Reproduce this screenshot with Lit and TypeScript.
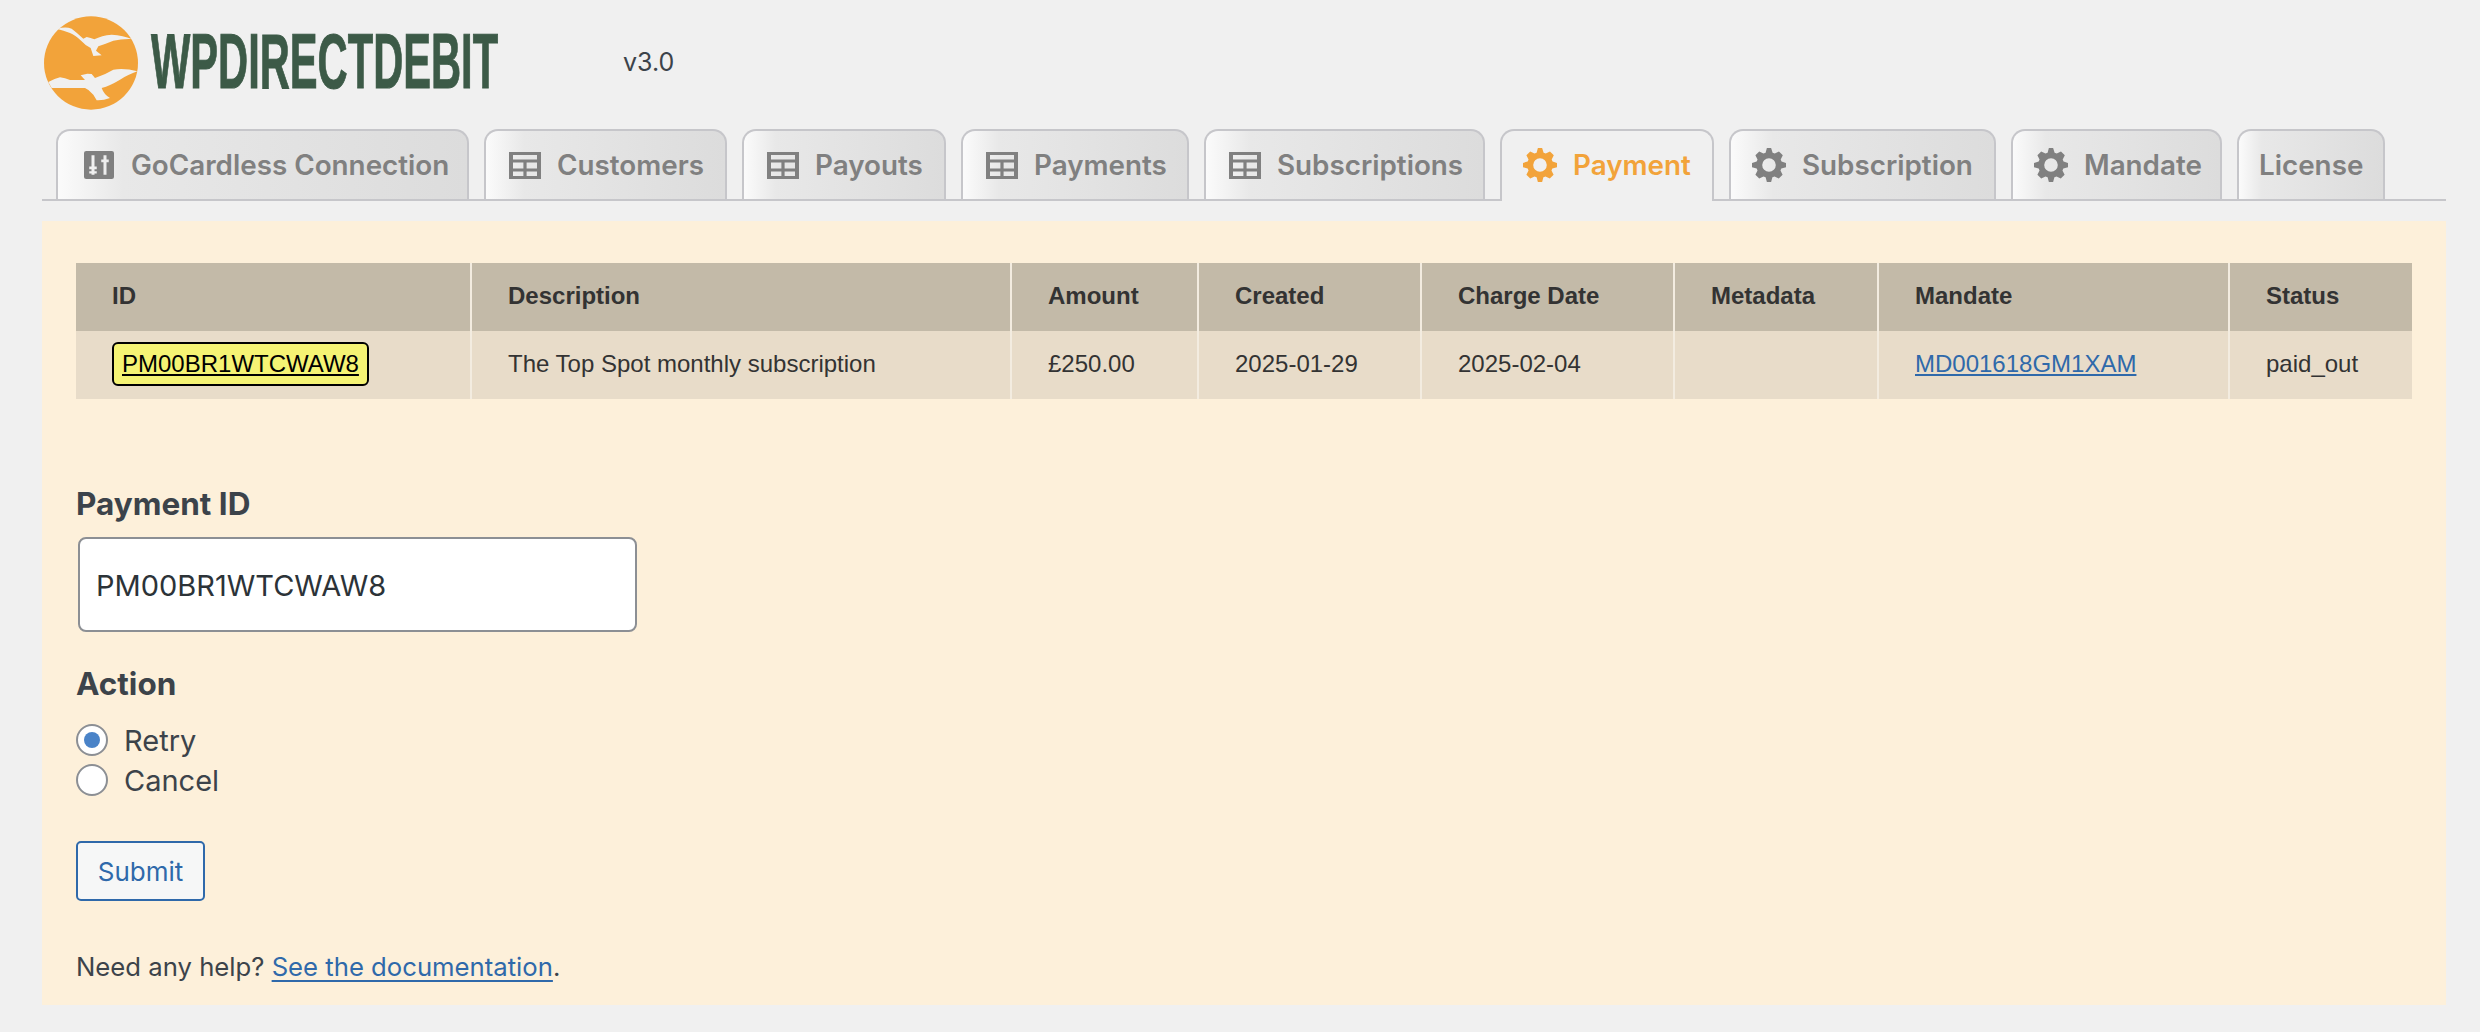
import { LitElement, html, css, svg } from "lit";
import { customElement } from "lit/decorators.js";

const gear = svg`<path fill-rule="evenodd" d="M18 11v-2l-2.100-.6-.4-1 1-2-1.800-1.800-2 1-1-.4L11 2H9L8.400 4.200l-1 .4-2-1L3.600 5.400l1 2-.4 1L2 9v2l2.200.6.4 1-1 2L5.400 16.400l2-1 1 .4L9 18h2l.6-2.200 1-.4 2 1 1.800-1.800-1-2 .4-1zM10 13.200a3.200 3.200 0 1 1 0-6.400 3.200 3.200 0 0 1 0 6.400z"/>`;
const tableIcon = svg`<path fill-rule="evenodd" d="M0 1h20v18H0zM2.500 3v3h15V3zM2.500 8v4H9V8zM11 8v4h6.500V8zM2.500 14v3H9v-3zM11 14v3h6.500v-3z"/>`;
const sliders = svg`<path fill-rule="evenodd" d="M1.500 0h17A1.500 1.500 0 0 1 20 1.500v17a1.500 1.500 0 0 1-1.500 1.500h-17A1.500 1.500 0 0 1 0 18.500v-17A1.500 1.500 0 0 1 1.500 0zM5 3v8H3.500v2H5v1.500H3.500V16H5v1h2v-1h1.500v-1.500H7V13h1.500v-2H7V3zM13 3v3h-1.500v2H13v9h2V8h1.500V6H15V3z"/>`;

type Tab = { label: string; icon?: "g" | "t" | "s"; active?: boolean; w: number };
const TABS: Tab[] = [
  { label: "GoCardless Connection", icon: "s", w: 413 },
  { label: "Customers", icon: "t", w: 243 },
  { label: "Payouts", icon: "t", w: 204 },
  { label: "Payments", icon: "t", w: 228 },
  { label: "Subscriptions", icon: "t", w: 281 },
  { label: "Payment", icon: "g", active: true, w: 214 },
  { label: "Subscription", icon: "g", w: 267 },
  { label: "Mandate", icon: "g", w: 211 },
  { label: "License", w: 148 },
];

const COLS = [395, 540, 187, 223, 253, 204, 351, 183];
const HEAD = ["ID", "Description", "Amount", "Created", "Charge Date", "Metadata", "Mandate", "Status"];

@customElement("app-root")
export class AppRoot extends LitElement {
  static styles = css`
    :host { display: block; width: 2480px; height: 1032px; background: #f0f0f0; overflow: hidden; font-family: Inter, "Liberation Sans", sans-serif; color: #3c434a; }
    .head { display: flex; align-items: flex-start; height: 129px; padding: 16px 0 0 44px; box-sizing: border-box; }
    .logo { width: 94px; height: 94px; flex: none; }
    .brand { width: 347px; margin-left: 13px; margin-top: 15px; height: 60px; line-height: 60px; font-family: "Liberation Sans", sans-serif; font-weight: 700; font-size: 78px; color: #3c5a47; white-space: nowrap; }
    .brand span { display: inline-block; transform-origin: left center; transform: scaleX(0.534); -webkit-text-stroke: 1px #3c5a47; }
    .ver { margin-left: 125px; margin-top: 30px; font-size: 25px; line-height: 32px; }
    .tabs { display: flex; gap: 15px; margin: 0 34px 0 42px; padding-left: 14px; height: 72px; box-sizing: border-box; border-bottom: 2px solid #c6c6ca; }
    .tab { height: 70px; box-sizing: border-box; flex: none; display: flex; align-items: center; gap: 16px; border: 2px solid #c6c6ca; border-bottom: 0; border-radius: 14px 14px 0 0; background: linear-gradient(to right, #fbfbfb, #e8e8e8 16%, #dcdcdc); color: #808080; font-weight: 600; font-size: 27.800px; padding: 0 0 0 23px; }
    .tab.g { padding-left: 21px; }
    .tab.s { padding-left: 26px; gap: 17px; }
    .tab.n { padding-left: 20px; }
    .tab.on { background: #f0f0f0; color: #f2a33a; position: relative; z-index: 1; height: 72px; padding-bottom: 2px; }
    .tab svg { flex: none; fill: #808080; }
    .tab.on svg { fill: #f2a33a; }
    .tab.t svg { width: 32px; height: 27px; }
    .tab.g svg { width: 34px; height: 34px; }
    .tab.s svg { width: 30px; height: 28px; }
    .panel { margin: 20px 34px 0 42px; height: 784px; background: #fdf0da; padding: 42px 34px 0 34px; box-sizing: border-box; }
    table { border-collapse: collapse; table-layout: fixed; width: 2336px; font-family: "Liberation Sans", sans-serif; font-size: 24px; color: #333; }
    th, td { text-align: left; padding: 0 0 2px 36px; height: 68px; box-sizing: border-box; border-left: 2px solid #f3ece0; }
    th:first-child, td:first-child { border-left: 0; }
    th { background: #c3baa8; font-weight: 700; }
    td { background: #e8dcc9; font-weight: 400; }
    .chip { display: inline-block; border: 2px solid #000; border-radius: 6px; background: #f5f374; color: #000; text-decoration: underline; padding: 0 8px; height: 44px; line-height: 40px; box-sizing: border-box; vertical-align: middle; }
    a { color: #2f69aa; text-decoration: underline; }
    .lab { font-size: 31.500px; font-weight: 700; line-height: 40px; }
    .l1 { margin-top: 85px; }
    .inp { display: block; margin: 13px 0 0 2px; width: 559px; height: 95px; box-sizing: border-box; border: 2px solid #8c8f94; border-radius: 8px; background: #fff; font: 400 29px Inter, sans-serif; color: #2c3338; padding: 2px 16px 0; outline: none; }
    .l2 { margin-top: 32px; }
    .radios { margin-top: 16px; display: flex; flex-direction: column; }
    .radio { display: flex; align-items: center; gap: 16px; height: 40px; font-size: 29px; }
    .dot { width: 32px; height: 32px; box-sizing: border-box; border: 2px solid #8c8f94; border-radius: 50%; background: #fff; display: flex; align-items: center; justify-content: center; flex: none; }
    .dot.on::after { content: ""; width: 16px; height: 16px; border-radius: 50%; background: #4a83c8; }
    .submit { display: block; margin-top: 41px; width: 129px; height: 60px; box-sizing: border-box; border: 2px solid #2f69aa; border-radius: 5px; background: #f6f7f7; color: #2f69aa; font: 400 26px Inter, sans-serif; padding: 0; }
    .help { margin-top: 48px; font-size: 25.700px; line-height: 36px; }
    .help a { text-underline-offset: 4px; text-decoration-thickness: 2px; }
  `;

  icon(k?: string) {
    if (!k) return null;
    if (k === "g") return html`<svg viewBox="2 2 16 16">${gear}</svg>`;
    if (k === "t") return html`<svg viewBox="0 1 20 18" preserveAspectRatio="none">${tableIcon}</svg>`;
    return html`<svg viewBox="0 0 20 20" preserveAspectRatio="none">${sliders}</svg>`;
  }

  render() {
    return html`
      <div class="head">
        <svg class="logo" viewBox="42 35 282 280">
          <ellipse cx="183" cy="175" rx="141" ry="140" fill="#f2a33a"/>
          <path fill="#f0f0f0" d="M82 73Q105 65 125 72Q142 85 160 102L170 97Q182 100 193 104Q215 92 245 90Q280 92 305 103Q275 102 250 108Q225 118 205 125L198 138L215 152L190 154L182 130Q165 122 155 110Q135 90 120 85Q100 78 82 73Z"/>
          <path fill="#f0f0f0" d="M55 232Q75 222 90 218Q105 220 120 226L165 226L152 212L172 207L185 208L195 220Q225 210 250 195Q285 190 322 200Q290 212 270 225Q240 243 215 250Q222 270 240 280Q220 288 200 287L190 270Q178 255 165 250L65 250Z"/>
        </svg>
        <div class="brand"><span>WPDIRECTDEBIT</span></div>
        <div class="ver">v3.0</div>
      </div>
      <div class="tabs">
        ${TABS.map(t => html`<div class="tab ${t.icon ?? "n"} ${t.active ? "on" : ""}" style="width:${t.w}px">${this.icon(t.icon)}<span>${t.label}</span></div>`)}
      </div>
      <div class="panel">
        <table>
          <colgroup>${COLS.map(c => html`<col style="width:${c}px" />`)}</colgroup>
          <thead><tr>${HEAD.map(h => html`<th>${h}</th>`)}</tr></thead>
          <tbody><tr>
            <td><span class="chip">PM00BR1WTCWAW8</span></td>
            <td>The Top Spot monthly subscription</td>
            <td>£250.00</td>
            <td>2025-01-29</td>
            <td>2025-02-04</td>
            <td></td>
            <td><a href="#">MD001618GM1XAM</a></td>
            <td>paid_out</td>
          </tr></tbody>
        </table>
        <div class="lab l1">Payment ID</div>
        <input class="inp" .value=${"PM00BR1WTCWAW8"} />
        <div class="lab l2">Action</div>
        <div class="radios">
          <div class="radio"><span class="dot on"></span>Retry</div>
          <div class="radio"><span class="dot"></span>Cancel</div>
        </div>
        <button class="submit">Submit</button>
        <div class="help">Need any help? <a href="#">See the documentation</a>.</div>
      </div>
    `;
  }
}
